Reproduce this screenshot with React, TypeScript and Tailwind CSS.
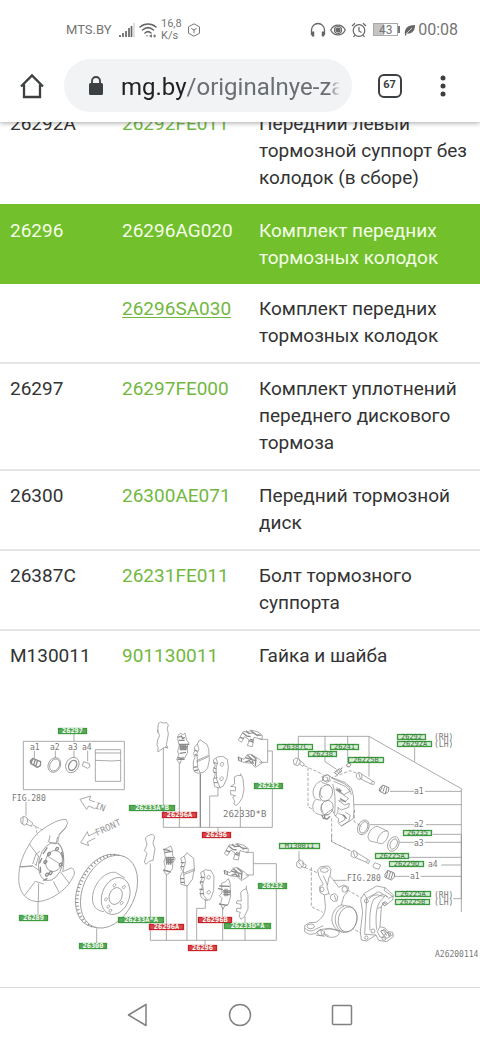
import React from "react";

type Part = { code: string; number: string; name: string; active?: boolean; grouped?: boolean };

const parts: Part[] = [
  { code: "26292A", number: "26292FE011", name: "Передний левый тормозной суппорт без колодок (в сборе)", grouped: true },
  { code: "26296", number: "26296AG020", name: "Комплект передних тормозных колодок", active: true },
  { code: "", number: "26296SA030", name: "Комплект передних тормозных колодок", grouped: true },
  { code: "26297", number: "26297FE000", name: "Комплект уплотнений переднего дискового тормоза" },
  { code: "26300", number: "26300AE071", name: "Передний тормозной диск" },
  { code: "26387C", number: "26231FE011", name: "Болт тормозного суппорта" },
  { code: "M130011", number: "901130011", name: "Гайка и шайба" },
];

function StatusBar() {
  return (
    <div className="flex h-[59px] items-center justify-between pr-[22px] pl-[66px] text-[#757575]">
      <div className="flex items-center">
        <span className="w-[53px] text-[13px]">MTS.BY</span>
        <svg className="mr-1 h-4 w-4" viewBox="0 0 16 16" fill="none" stroke="#666" strokeWidth="1.7">
          <path d="M1 15v-2M4 15v-4M7 15V9M10 15V6M12.500 15V4" />
          <path d="M15 15V1" stroke="#ccc" strokeWidth="1.200" />
        </svg>
        <svg className="mr-1 h-4 w-[18px]" viewBox="0 0 18 16" fill="none" stroke="#666" strokeWidth="1.5" strokeLinecap="round">
          <path d="M1 5C5.500 1 12.500 1 17 5M3.500 8c3.500-3 7.500-3 11 0M6 11c2-1.800 4-1.800 6 0" />
          <path d="M7.500 13.800h1M11 13.800l1.500-1v2zM16.500 13.800l-1.500-1v2z" fill="#666" strokeWidth=".8" />
        </svg>
        <span className="w-[26px] text-[11px] leading-[12px]">
          <span className="block">16,8</span>
          <span className="block">K/s</span>
        </span>
        <svg className="h-[14px] w-[14px]" viewBox="0 0 14 14" fill="none" stroke="#777" strokeWidth="1">
          <path d="M7 .8l5.500 3v6.400L7 13.200l-5.500-3V3.800zM4.300 5.300L7 7l2.700-1.700M7 7v3.300" />
        </svg>
      </div>
      <div className="flex items-center">
        <svg className="mr-[4px] h-4 w-4" viewBox="0 0 16 16" fill="none" stroke="#666" strokeWidth="1.300">
          <path d="M1.500 13V8a6.500 6.500 0 0 1 13 0v5" />
          <path d="M3 9.500V14.500M13 9.500V14.500" strokeWidth="2.500" />
        </svg>
        <svg className="mr-[5px] h-4 w-4" viewBox="0 0 16 16" fill="none" stroke="#666" strokeWidth="1.200">
          <path d="M.7 8C4 1.500 12 1.500 15.300 8 12 14.500 4 14.500.7 8z" />
          <circle cx="8" cy="8" r="3.500" />
          <circle cx="8" cy="8" r="2" fill="#666" />
        </svg>
        <svg className="mr-[6px] h-4 w-4" viewBox="0 0 16 16" fill="none" stroke="#666" strokeWidth="1.200">
          <circle cx="8" cy="8.500" r="5.800" />
          <path d="M8 5v4l2.500 1.500M1 4l3-2.700M15 4l-3-2.700M4 13l-1.500 2M12 13l1.500 2" />
        </svg>
        <span className="flex h-[13px] w-[25px] items-center justify-center border border-[#aaa] bg-linear-to-r from-[#c4c4c4] from-45% to-white to-45% text-[12px] leading-none">43</span>
        <span className="mr-[4px] h-[7px] w-[2px] bg-[#777]" />
        <svg className="mr-[3px] h-3 w-[11px]" viewBox="0 0 11 12" fill="#666">
          <path d="M1 11C0 5 3 1 11 1c0 6-3 9-8 8.500L1.500 12z" />
          <path d="M2 10l6-6" stroke="#fff" strokeWidth=".7" />
        </svg>
        <span className="text-[16px]">00:08</span>
      </div>
    </div>
  );
}

function Toolbar() {
  return (
    <div className="flex h-[63px] items-start">
      <button aria-label="Home" className="flex h-[53px] w-16 items-center justify-center">
        <svg className="h-7 w-7" viewBox="0 0 28 28" fill="none" stroke="#3c4043" strokeWidth="2.300">
          <path d="M3 14.500L14 3.500 25 14.500M6 12.500V25h16V12.500" />
        </svg>
      </button>
      <button aria-label="Address" className="flex h-[53px] min-w-0 flex-1 items-center rounded-full bg-[#f1f3f4] pr-3 pl-6 text-left">
        <svg className="mr-[17px] h-5 w-4 shrink-0" viewBox="0 0 16 20">
          <rect x="1" y="7" width="14" height="12" rx="1.500" fill="#3c4043" />
          <path d="M4 8V5a4 4 0 0 1 8 0v3" fill="none" stroke="#3c4043" strokeWidth="1.800" />
        </svg>
        <span className="min-w-0 flex-1 overflow-hidden mask-r-from-95% pt-0.5 text-[24px] whitespace-nowrap text-[#6b6e72]">
          <span className="text-[#202124]">mg.by</span>/originalnye-za
        </span>
      </button>
      <button aria-label="Tabs" className="flex h-[53px] w-[75px] items-center justify-center">
        <span className="flex h-6 w-6 items-center justify-center rounded-[6px] border-2 border-[#3c4043] text-[11px] font-bold text-[#3c4043]">67</span>
      </button>
      <button aria-label="Menu" className="flex h-[53px] w-[53px] items-center pl-[11px]">
        <svg className="h-6 w-6" viewBox="0 0 24 24" fill="#3c4043">
          <circle cx="5" cy="4" r="2.500" />
          <circle cx="5" cy="12" r="2.500" />
          <circle cx="5" cy="20" r="2.500" />
        </svg>
      </button>
    </div>
  );
}

type Tag = { x: number; y: number; w: number; t: string; c: "g" | "r" | "o" };

const tags: Tag[] = [
  { x: 58, y: 728, w: 29, t: "26297", c: "g" },
  { x: 19, y: 915, w: 29, t: "26289", c: "g" },
  { x: 79, y: 943, w: 28, t: "26300", c: "g" },
  { x: 118, y: 917, w: 46, t: "26233A*A", c: "g" },
  { x: 129, y: 805, w: 46, t: "26233A*B", c: "g" },
  { x: 162, y: 812, w: 35, t: "26296A", c: "r" },
  { x: 202, y: 832, w: 29, t: "26296", c: "r" },
  { x: 254, y: 783, w: 29, t: "26232", c: "g" },
  { x: 258, y: 883, w: 29, t: "26232", c: "g" },
  { x: 149, y: 924, w: 35, t: "26296A", c: "r" },
  { x: 198, y: 917, w: 34, t: "26296B", c: "r" },
  { x: 224, y: 923, w: 47, t: "26233D*A", c: "g" },
  { x: 188, y: 945, w: 29, t: "26296", c: "r" },
  { x: 277, y: 744, w: 36, t: "26387C", c: "o" },
  { x: 308, y: 751, w: 29, t: "26238", c: "o" },
  { x: 330, y: 744, w: 29, t: "26241", c: "o" },
  { x: 348, y: 757, w: 36, t: "26225B", c: "o" },
  { x: 397, y: 734, w: 29, t: "26292", c: "o" },
  { x: 397, y: 741, w: 35, t: "26292A", c: "o" },
  { x: 403, y: 830, w: 29, t: "26235", c: "o" },
  { x: 279, y: 843, w: 41, t: "M130011", c: "o" },
  { x: 375, y: 853, w: 34, t: "26225A", c: "o" },
  { x: 389, y: 861, w: 35, t: "26229D", c: "o" },
  { x: 395, y: 891, w: 36, t: "26225A", c: "o" },
  { x: 395, y: 899, w: 35, t: "26225B", c: "o" },
];

function TagBox({ x, y, w, t, c }: Tag) {
  const edge = c === "r" ? "#c91f26" : "#3a9a3d";
  const fill = c === "o" ? "#d9ecd6" : c === "r" ? "#d9474c" : "#5aab5a";
  return (
    <g>
      <rect x={x + 0.5} y={y + 0.5} width={w - 1} height="5" fill={fill} stroke={edge} strokeWidth="1.300" />
      <text x={x + w / 2} y={y + 5} textAnchor="middle" fontSize="7" fontWeight={c === "o" ? 400 : 700} fill={c === "o" ? "#347a37" : "#f4faf3"}>
        {t}
      </text>
    </g>
  );
}

function Caliper() {
  return (
    <g transform="translate(270 720) scale(.33333)">
      <path d="M85 115V49H297L574 206V576M165 49V125L200 148M233 49V128M297 49V170M434 83V125M360 214H432M465 214H574M250 254H574M300 314H432M468 314H574M488 343H574" />
      <path d="M103 137L160 164M180 175L240 152 262 160M114 143V260L150 280M185 295V365L245 394M253 270V305L275 320" strokeDasharray="10 5" />
      <path d="M70 120l8-6 10 3 3 12-7 8-12-4zM88 120l15 12-4 7-14-9M84 117l-7 17" />
      <path d="M193 158l15-12 8 6-14 12zM199 152l7 8M205 148l6 8M212 147l6-4M230 134l7-5 6 4-5 8-7-1z" strokeWidth="3" />
      <path d="M259 163l7-6 9 4 1 13-9 5-8-7zM276 163l32 20-5 9-31-15M308 183l6 3-3 8-8-2M266 158l5 18" />
      <path d="M329 205l9-10 19 8-2 12-10 7-17-9zM337 198l-6 15M344 199l-5 16M351 202l-5 18" strokeWidth="3" />
      <path fill="#fff" d="M160 168L174 164 184 172 226 188 244 204 250 226 252 268 250 296 234 306 214 318 204 308 206 296 196 288 186 268 160 286C145 284 133 280 129 268 127 256 130 245 138 238 129 230 126 215 133 202 138 190 148 183 158 182z" />
      <ellipse cx="168" cy="219" rx="19" ry="25" transform="rotate(20 168 219)" />
      <ellipse cx="171" cy="263" rx="18" ry="22" transform="rotate(20 171 263)" />
      <path d="M154 202C148 214 150 226 158 234M157 250C152 260 154 270 160 277M139 238L153 241M155 187L180 196M160 286L176 284M156 168L160 181 172 187 183 180M188 192C195 215 197 240 194 280" />
      <path d="M162 168L172 164 180 171 177 181 166 184 158 177zM166 171L174 174 171 183M184 174L223 191 238 203 244 225M191 184L228 200 240 214 222 224 210 214 200 202M196 209L218 223 236 236 226 244 206 242 224 255 238 250 236 262 214 270 203 262M205 280L226 288 224 300 208 308M214 318L236 304 241 286 226 276M196 288L203 278 205 262" />
      <path d="M155 284L160 295 172 297 180 289M164 286V296M199 207L212 217M206 206L214 214M210 236L228 246M218 284L230 296" strokeWidth="4" />
      <ellipse cx="280" cy="322" rx="16" ry="23" transform="rotate(25 280 322)" />
      <ellipse cx="281" cy="322" rx="11" ry="18" transform="rotate(25 281 322)" />
    </g>
  );
}

function Knuckle() {
  return (
    <g transform="translate(270 835) scale(.33333)">
      <path d="M388 22H433M464 22H574M415 67H574M514 90H574M375 124H418M452 124H574M550 191H574V0" />
      <path d="M185 0V20L242 48M104 97l40 17M124 97V215L158 232M232 165l46 26M230 270l48 28" strokeDasharray="10 5" />
      <path fill="#fff" d="M294 8C294 -8 308 -26 322 -26L352 -12C362 -4 346 26 334 26L300 18z" />
      <path d="M322 20C322 4 336 -14 352 -12" />
      <ellipse cx="370" cy="27" rx="16" ry="23" fill="#fff" transform="rotate(25 370 27)" />
      <ellipse cx="371" cy="27" rx="10" ry="16" transform="rotate(25 371 27)" />
      <path d="M87 48V80M80 83l8-9 11 5 1 13-10 8-10-6zM96 83l13 7-4 9-12-5M84 80l10 12" />
      <path d="M244 52l7-6 9 5 2 12-9 6-10-6zM260 53l33 20-4 9-34-15M293 73l6 4-4 9-6-4M250 48l4 17M309 91l6-8 17 7-5 13-16-5z" />
      <path d="M345 118l8-12 20 8 1 12-10 9-19-8zM354 107l-5 20M362 109l-6 21M369 113l-6 19" strokeWidth="3" />
      <path fill="#fff" d="M143 105L152 95 175 93 183 103 180 124 190 134 206 157 222 150 236 157 232 172 222 182 214 210 240 214C262 224 266 248 256 270 248 288 232 294 218 292L198 284 178 280 150 284 136 296 118 298 104 290 104 272 118 263 138 262C158 250 168 232 166 210L163 180 150 172 149 155 160 148 146 122z" />
      <ellipse cx="163" cy="105" rx="12" ry="7" />
      <ellipse cx="156" cy="163" rx="6" ry="7" />
      <ellipse cx="224" cy="163" rx="8" ry="9" />
      <ellipse cx="122" cy="274" rx="11" ry="7" />
      <path d="M106 280C114 290 128 290 138 282L160 272M178 124L171 155 178 180M214 210C196 216 184 236 186 258 188 274 198 284 210 288M183 180L195 176 203 183 201 198 190 199 181 190zM193 181L198 196M189 136H230M160 122L172 150M163 180L176 176" />
      <path d="M222 214C202 220 194 240 196 258 198 276 208 288 222 292" />
      <ellipse cx="233" cy="253" rx="28" ry="38" transform="rotate(12 233 253)" />
      <path d="M140 292L152 284 164 290 162 300 148 302zM152 285L156 300M164 284C170 280 200 282 208 292 206 308 180 312 164 300M160 295L176 302M138 300L164 304" />
      <path fill="#fff" d="M272 193L283 175 320 153 345 158 370 180 368 195 350 208 340 203 334 216 330 275 345 279 355 290 368 292 370 305 350 320 326 316 318 300 290 318 274 315 271 290 278 230z" />
      <path d="M283 177L290 190 326 170 354 186M290 190L284 298 318 300M298 192C302 182 322 176 330 182L338 178M300 286C298 250 300 210 312 192L330 182 344 184 330 200C318 216 316 250 320 284M345 180L356 190 368 184M345 158L342 166 370 186M334 216L324 220M330 275L322 290 330 306 350 310 370 298M340 284L350 302" />
      <circle cx="289" cy="198" r="6" />
      <circle cx="289" cy="308" r="5" />
      <circle cx="309" cy="288" r="6" />
      <circle cx="342" cy="310" r="6" />
      <path d="M337 205L346 200 352 206 344 213zM332 288L344 284 350 292 342 302zM352 292L362 296 358 304z" strokeWidth="3" />
    </g>
  );
}

function Clip() {
  return (
    <g>
      <path d="M325 90L340 64 354 67 362 60 384 66 397 76 396 88 372 82 367 110 352 107 358 90 344 80 334 97z" />
      <path d="M324 141L342 148 352 134 364 133 388 148 398 158 376 172 364 160 346 158 326 152z" />
      <path d="M338 68L350 78 362 80M348 62L356 70 370 68 384 78M362 62L378 74 394 76M356 92L370 96M360 88L371 90M330 82L342 86M326 140V152M334 144V154M346 143L362 148 378 152M352 136L366 148 370 162M364 134L378 146 376 168M346 156L358 152 366 160" strokeWidth="4" />
    </g>
  );
}

function PadsTop() {
  return (
    <g transform="translate(130 710) scale(.33333)">
      <path d="M100 112V352H427V123M148 158V352M264 232V258H239V352M331 290V352M264 352V370M388 88H413V157H388M413 123H427" />
      <path d="M211 190V352" strokeWidth="4" />
      <path d="M85 41L91 36 98 39 110 38 115 45 112 55 115 72 109 105 114 112 103 113 90 121 84 126V112L81 105 83 89 89 77 83 63zM85 60L82 68M106 108L112 116" />
      <path d="M143 78L152 70 160 74 165 69 170 92 177 98 172 108 173 128 164 144 156 141 151 160 145 156 140 148 146 136 143 122 148 108 144 92z" />
      <path d="M144 82L154 78 158 86 164 82M147 103H178M148 109H174M149 114H172M149 119H170M151 104V121M156 104V121M161 104V121M166 104V121M143 142L164 148M146 91H164M142 148H160M149 130L168 127" strokeWidth="4" />
      <path d="M193 112L202 102 207 92 213 90 219 96 230 102 236 116 238 150 233 174 222 186 205 190 194 186 190 178 190 154 195 142 190 130 195 122zM202 102L207 118 201 130 203 172 210 188M200 152L236 136M200 156L236 140" />
      <path d="M193 120L203 124M194 134L203 137M191 172L202 170M193 182L204 180" strokeWidth="4" />
      <path d="M250 150L262 141 278 139 292 148 295 172 291 204 280 228 267 234 254 230 250 208 256 194 249 180 256 168zM258 145L263 158 258 175 260 208 270 233M271 163c1-8 11-7 10 0s-11 8-10 0zM270 206c1-8 11-7 10 0s-11 8-10 0z" />
      <path d="M249 158L262 160M250 173L260 177M250 186L260 188M252 205L262 203M252 218L264 218" strokeWidth="3" />
      <path d="M313 201L323 196 335 197 339 207 342 238 337 263 326 280 318 287 312 282 314 273 308 262 316 257 302 254V241L316 243 317 231 302 229 314 222zM332 197V190" />
      <Clip />
    </g>
  );
}

function PadsBottom() {
  return (
    <g transform="translate(130 830) scale(.33333)">
      <path d="M61 100V331H439V101H370M109 134V331M171 165V331M226 207V235H200V331M278 230V331M345 260V331M225 331V345M347 67H370V135H347" />
      <path d="M46 24L56 16 68 13 74 20 69 40 75 57 69 91 57 94 48 103 43 96 51 70 43 62 51 45z" />
      <path d="M102 58L112 54 122 48 127 60 128 78 136 86 129 96 127 116 118 130 108 134 101 122 106 112 102 96 106 82z" />
      <path d="M104 68L126 64M106 83H134M107 88H132M107 93H130M108 98H128M110 80V104M116 80V104M122 80V104M100 120L122 126M99 58L120 62" strokeWidth="4" />
      <path d="M152 85L166 76 171 68 180 76 191 85 193 116 187 148 172 168 153 163 151 140 158 124 152 112 157 100zM163 79L167 95 160 120 164 164M162 129L195 116M161 134L195 121" />
      <path d="M152 98H164M152 110H162M151 146H162M152 157H163" strokeWidth="4" />
      <path d="M212 128L226 119 243 122 252 138 251 182 241 208 228 212 214 202 210 190 217 170 210 158 216 146zM221 123L225 140 218 164 221 196 233 211M231 142c1-8 11-7 10 0s-11 8-10 0zM231 187c1-8 11-7 10 0s-11 8-10 0z" />
      <path d="M211 142H222M210 156H219M208 178H220M210 191H222" strokeWidth="4" />
      <path d="M275 160L287 155 295 146 300 158 302 198 295 223 284 228 279 238 271 223 276 205 268 197 276 189z" />
      <path d="M268 168L299 169M279 183H303M280 188H302M280 194H300M285 176V199M291 176V199M267 222L293 226M264 175L278 179" strokeWidth="4" />
      <path d="M332 187L341 179 349 176 354 194V237L343 260 333 268 327 258 331 247 319 244 321 234 333 236V223L319 220 321 212 334 213zM349 176V167" />
      <g transform="translate(-42 -20)">
        <Clip />
      </g>
    </g>
  );
}

function DiscAndPanel() {
  return (
    <g transform="translate(0 710) scale(.33333)">
      <path d="M70 94H373V239H70zM222 71V94M103 122V146M166 122V144M222 122V144M263 122V154M78 276V317M114 575V615M290 655V700" />
      <path d="M286 119H362V214H286zM286 129H362M286 151l50 2 26-2" />
      <path d="M91 153l7-8 24 10-1 12-9 5-20-12zM99 146l-6 13M106 148l-5 17M113 151l-6 18" strokeWidth="4" />
      <ellipse cx="163" cy="165" rx="18" ry="23" transform="rotate(28 163 165)" />
      <ellipse cx="164" cy="165" rx="14" ry="19" transform="rotate(28 164 165)" />
      <ellipse cx="217" cy="165" rx="19" ry="24" transform="rotate(28 217 165)" />
      <ellipse cx="218" cy="166" rx="11" ry="16" transform="rotate(28 218 166)" strokeWidth="4" />
      <path d="M251 155l17 6 2 9-7 5-16-8z" />
      <path d="M240 268L272 258 268 270 285 276M240 268L260 298 266 288 284 296M242 398L262 365 266 378 290 366M242 398L266 407 262 396 286 384" />
      <path d="M62 325l9-6 10 4 2 14-9 9-11-7zM82 327l16 12-4 10-16-7M70 320l-2 22" />
      <path d="M98 345L128 360M107 348L112 376" strokeDasharray="8 5" />
      <path d="M125 360C150 342 175 328 198 328L203 338C198 355 188 365 178 374L173 396C192 415 195 455 188 485L213 474C222 476 226 486 221 497 205 535 160 570 115 575 85 575 62 555 57 520 53 480 65 440 84 410 95 388 108 372 125 360z" />
      <path d="M88 402L116 440M60 470L98 468 118 482M58 470C72 474 88 466 98 468M74 556L106 514 132 522M115 575L116 520M160 514L178 548M182 486L208 520M150 376L146 396 168 402 173 380M176 374L200 350M98 462L108 432 120 424M108 466L116 438M104 462L110 466" />
      <ellipse cx="153" cy="455" rx="36" ry="58" transform="rotate(14 153 455)" />
      <ellipse cx="162" cy="453" rx="25" ry="32" transform="rotate(14 162 453)" />
      <path d="M129 432L142 412M121 470L122 488M126 444L118 460M184 426L190 446M130 512L142 505M144 430c4-6 10-1 6 4s-10 2-6-4zM168 415c4-6 10-1 6 4s-10 2-6-4zM179 462c4-6 10-1 6 4s-10 2-6-4zM149 487c4-6 10-1 6 4s-10 2-6-4zM133 454c4-6 10-1 6 4s-10 2-6-4zM138 492c4-6 10-1 6 4s-10 2-6-4z" strokeWidth="4" />
      <path d="M142 438L180 462" />
      <ellipse cx="312" cy="542" rx="78" ry="115" transform="rotate(25 312 542)" />
      <ellipse cx="317" cy="543" rx="78" ry="113" strokeWidth="8" strokeDasharray="3 8" transform="rotate(25 317 543)" />
      <ellipse cx="327" cy="545" rx="78" ry="115" fill="#fff" transform="rotate(25 327 545)" />
      <path d="M312 605C288 602 274 586 278 556 284 516 316 484 346 487L374 503" />
      <ellipse cx="347" cy="558" rx="41" ry="57" transform="rotate(20 347 558)" />
      <ellipse cx="347" cy="558" rx="19" ry="26" transform="rotate(20 347 558)" />
      <path d="M340 524c4-6 10-1 6 4s-10 2-6-4zM369 529c4-6 10-1 6 4s-10 2-6-4zM315 566c4-6 10-1 6 4s-10 2-6-4zM362 577c4-6 10-1 6 4s-10 2-6-4zM322 588c4-6 10-1 6 4s-10 2-6-4zM328 600c4-6 10-1 6 4s-10 2-6-4z" />
    </g>
  );
}

function Diagram() {
  return (
    <svg className="mt-7 block w-full" viewBox="0 710 480 260" role="img" aria-label="Front brake" fontFamily='"DejaVu Sans Mono", monospace'>
      <g fill="none" stroke="#8c8c8c" strokeWidth="2.200" strokeLinejoin="round">
        <DiscAndPanel />
        <PadsTop />
        <PadsBottom />
        <Caliper />
        <Knuckle />
      </g>
      <g fill="#777" fontSize="8">
        <text x="30" y="750">a1</text>
        <text x="50" y="750">a2</text>
        <text x="68" y="750">a3</text>
        <text x="82" y="750">a4</text>
        <text x="12" y="801">FIG.280</text>
        <text x="94" y="808" fontSize="9" transform="rotate(20 94 808)" fill="#999">IN</text>
        <text x="97" y="836" fontSize="9" transform="rotate(-25 97 836)" fill="#999">FRONT</text>
        <text x="223" y="817" fontSize="9">26233D*B</text>
        <text x="414" y="794">a1</text>
        <text x="414" y="827">a2</text>
        <text x="414" y="846">a3</text>
        <text x="428" y="867">a4</text>
        <text x="410" y="879">a1</text>
        <text x="347" y="881">FIG.280</text>
        <text x="434" y="740">(RH)</text>
        <text x="434" y="747">(LH)</text>
        <text x="434" y="898">(RH)</text>
        <text x="434" y="905">(LH)</text>
        <text x="435" y="957">A26200114</text>
      </g>
      {tags.map((tag) => (
        <TagBox key={`${tag.x}-${tag.y}`} {...tag} />
      ))}
    </svg>
  );
}

function NavBar() {
  return (
    <nav className="flex h-[54px] items-center justify-center gap-[70px] border-t border-[#dcdcdc] bg-white">
      <button aria-label="Back" className="flex h-8 w-8 items-center justify-center">
        <svg className="h-6 w-6" viewBox="0 0 24 24" fill="none" stroke="#808080" strokeWidth="1.500" strokeLinejoin="round">
          <path d="M20 1.500v21L2.500 12z" />
        </svg>
      </button>
      <button aria-label="Home screen" className="flex h-8 w-8 items-center justify-center">
        <svg className="h-6 w-6" viewBox="0 0 24 24" fill="none" stroke="#808080" strokeWidth="1.500">
          <circle cx="12" cy="12" r="10.500" />
        </svg>
      </button>
      <button aria-label="Recent apps" className="flex h-8 w-8 items-center justify-center">
        <svg className="h-6 w-6" viewBox="0 0 24 24" fill="none" stroke="#808080" strokeWidth="1.500">
          <rect x="2.500" y="2.500" width="19" height="19" rx="1" />
        </svg>
      </button>
    </nav>
  );
}

export default function App() {
  return (
    <div className="flex min-h-screen flex-col bg-white font-[Roboto,sans-serif]">
      <header className="relative z-10 bg-white shadow-[0_1px_5px_rgba(0,0,0,0.35)]">
        <StatusBar />
        <Toolbar />
      </header>
      <main className="flex-1 overflow-hidden">
        <table className="-mt-[23px] w-full table-fixed border-collapse text-left text-[19px] leading-[27px] text-[#333]">
          <colgroup>
            <col className="w-[112px]" />
            <col className="w-[137px]" />
            <col />
          </colgroup>
          <tbody>
            {parts.map((p) => (
              <tr
                key={p.number}
                className={
                  p.active
                    ? "border-t-2 border-[#72c02c] bg-[#72c02c] text-[#f4ffe8]"
                    : p.grouped
                      ? ""
                      : "border-t-2 border-[#e5e5e5]"
                }
              >
                <td className="pt-[11px] pb-[13px] pl-[10px] align-top">{p.code}</td>
                <td className="pt-[11px] pb-[13px] pl-[10px] align-top">
                  <a
                    href={`#${p.number}`}
                    className={p.active ? "" : p.code === "" ? "text-[#72b840] underline underline-offset-2" : "text-[#72b840]"}
                  >
                    {p.number}
                  </a>
                </td>
                <td className="pt-[11px] pb-[13px] pr-1 pl-[10px] align-top">{p.name}</td>
              </tr>
            ))}
          </tbody>
        </table>
        <Diagram />
      </main>
      <NavBar />
    </div>
  );
}
